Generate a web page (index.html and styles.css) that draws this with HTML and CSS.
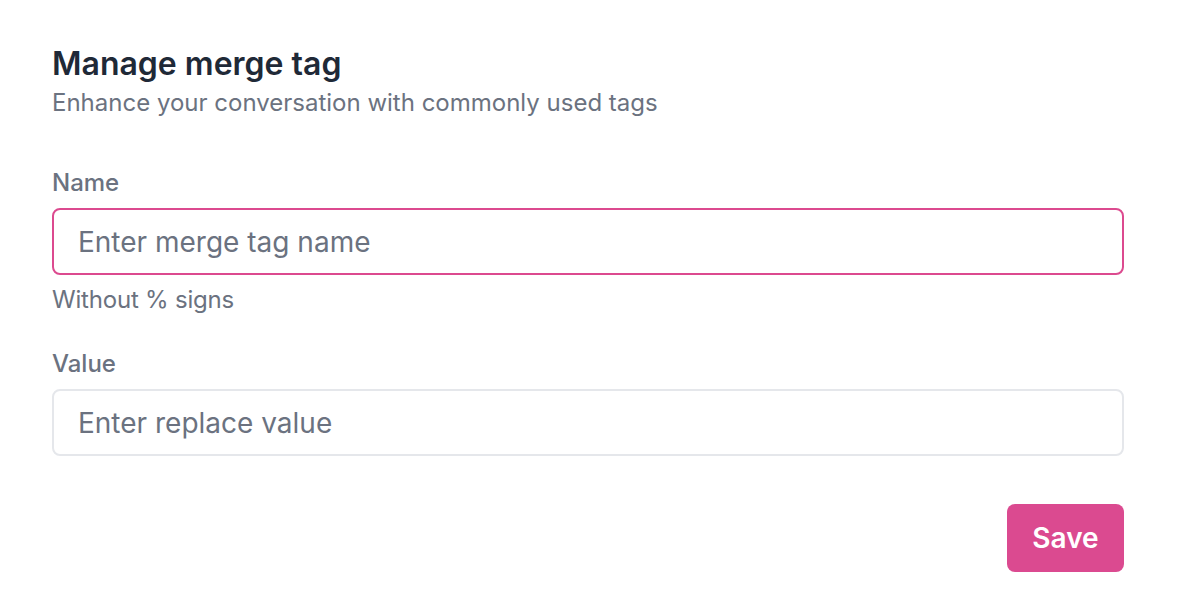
FILE: index.html
```html
<!DOCTYPE html>
<html>
<head>
<meta charset="utf-8">
<link rel="stylesheet" href="styles.css">
</head>
<body>
<div class="panel">
  <div class="header">
    <h1 class="title">Manage merge tag</h1>
    <p class="subtitle">Enhance your conversation with commonly used tags</p>
  </div>
  <div class="field field-name">
    <label class="label">Name</label>
    <input class="input input-focus" type="text" placeholder="Enter merge tag name">
    <p class="help">Without % signs</p>
  </div>
  <div class="field field-value">
    <label class="label">Value</label>
    <input class="input" type="text" placeholder="Enter replace value">
  </div>
  <div class="actions">
    <button class="btn">Save</button>
  </div>
</div>
</body>
</html>
```
FILE: styles.css
```css
* { box-sizing: border-box; }
html, body { margin: 0; padding: 0; background: #fff; }
body { font-family: Inter, "Noto Sans", sans-serif; }
.panel { padding: 44px 56px 0 52px; display: flex; flex-direction: column; }
.header { display: flex; flex-direction: column; gap: 3px; }
.title { margin: 0; font-size: 32px; line-height: 40px; font-weight: 600; color: #1f2937; }
.subtitle { margin: 0; font-size: 24px; line-height: 32px; color: #6b7280; }
.field { display: flex; flex-direction: column; }
.field-name { margin-top: 48px; }
.field-value { margin-top: 32px; }
.label { font-size: 24px; line-height: 32px; font-weight: 500; color: #6b7280; margin-bottom: 9px; }
.input { width: 100%; height: 67px; border: 2px solid #e5e7eb; border-radius: 8px; padding: 0 24px; font-family: inherit; font-size: 28px; color: #1f2937; outline: none; background: #fff; }
.input::placeholder { color: #6b7280; }
.input-focus { border-color: #dc4a8f; }
.help { margin: 9px 0 0; font-size: 24px; line-height: 32px; color: #6b7280; letter-spacing: -0.2px; }
.actions { display: flex; justify-content: flex-end; margin-top: 48px; }
.btn { width: 117px; height: 68px; border: none; border-radius: 8px; background: #db4a90; color: #fff; font-family: inherit; font-size: 28px; font-weight: 600; cursor: pointer; }
```
